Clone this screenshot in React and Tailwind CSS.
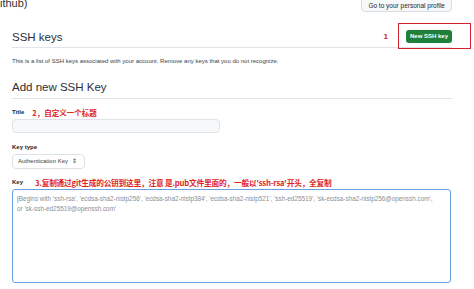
import React from "react";

export default function App() {
  const sans = { fontFamily: '"Liberation Sans", Arial, sans-serif' };
  const cjk = { fontFamily: '"Noto Sans CJK SC", "Noto Sans", sans-serif' };
  return (
    <div className="w-[474px] h-[289px] bg-white overflow-hidden relative text-[#24292f]" style={sans}>
      <div className="absolute left-0 top-[-5px] text-[11px] text-[#333]">ithub)</div>
      <div className="flex justify-end pr-[22px]">
        <div className="mt-[-4px] h-[16px] px-[6px] border border-[#d8dde3] bg-[#f6f8fa] rounded-[4px] flex items-center text-[6.5px] text-[#24292f] pt-[3px]">
          Go to your personal profile
        </div>
      </div>
      <div className="pl-[12px] pr-[22px]">
        <div className="mt-[18px] flex items-center justify-between border-b border-[#e1e4e8] pb-[4px] h-[18px]">
          <div className="text-[11.5px] leading-[14px] text-[#2a2f35]">SSH keys</div>
          <div className="flex items-center">
            <span className="text-[#d9202a] font-bold text-[8px] mr-[18px]">1</span>
            <div className="relative">
              <div className="absolute left-[-8px] top-[-7px] w-[73px] h-[26px] border-[1.5px] border-[#d1242f]"></div>
              <div className="bg-[#1f7f3b] text-white text-[6px] font-bold rounded-[3px] h-[13px] w-[46px] flex items-center justify-center">
                New SSH key
              </div>
            </div>
          </div>
        </div>
        <p className="mt-[9px] text-[6px] leading-[9px] text-[#3a3f45]">
          This is a list of SSH keys associated with your account. Remove any keys that you do not recognize.
        </p>
        <div className="mt-[13.5px] text-[11.5px] leading-[14px] text-[#2a2f35] border-b border-[#e1e4e8] pb-[4px]">Add new SSH Key</div>
        <div className="mt-[8px] flex items-center h-[11px]">
          <span className="text-[6px] font-bold">Title</span>
          <span className="ml-[8px] text-[7.5px] leading-[11px] font-bold text-[#e0241f]" style={cjk}>2，自定义一个标题</span>
        </div>
        <div className="mt-[1.5px] w-[208px] h-[14px] bg-[#f6f8fa] border border-[#dfe3e8] rounded-[4px]"></div>
        <div className="mt-[9.5px] text-[6px] leading-[9px] font-bold">Key type</div>
        <div className="mt-[2.5px] w-[73px] h-[15px] border border-[#dde1e6] rounded-[4px] flex items-center px-[5px] text-[6px] text-[#3a3f45] whitespace-nowrap">
          Authentication Key <span className="ml-[4px] text-[6px]">⇕</span>
        </div>
        <div className="mt-[7.5px] flex items-center h-[11px]">
          <span className="text-[6px] font-bold">Key</span>
          <span className="ml-[12px] text-[7.7px] leading-[11px] font-bold text-[#e0241f] tracking-[-0.2px]" style={cjk}>3.复制通过git生成的公钥到这里，注意 是.pub文件里面的，一般以'ssh-rsa'开头，全复制</span>
        </div>
        <div className="mt-[1.5px] w-[439px] h-[94px] border-[1.5px] border-[#6a9fe0] rounded-[3px] pl-[4px] pr-[2px] pt-[4px] text-[6.35px] leading-[10px] text-[#8a9096]">
          <div className="whitespace-nowrap"><span className="text-[#555]">|</span>Begins with 'ssh-rsa', 'ecdsa-sha2-nistp256', 'ecdsa-sha2-nistp384', 'ecdsa-sha2-nistp521', 'ssh-ed25519', 'sk-ecdsa-sha2-nistp256@openssh.com',</div>
          <div>or 'sk-ssh-ed25519@openssh.com'</div>
        </div>
      </div>
    </div>
  );
}
